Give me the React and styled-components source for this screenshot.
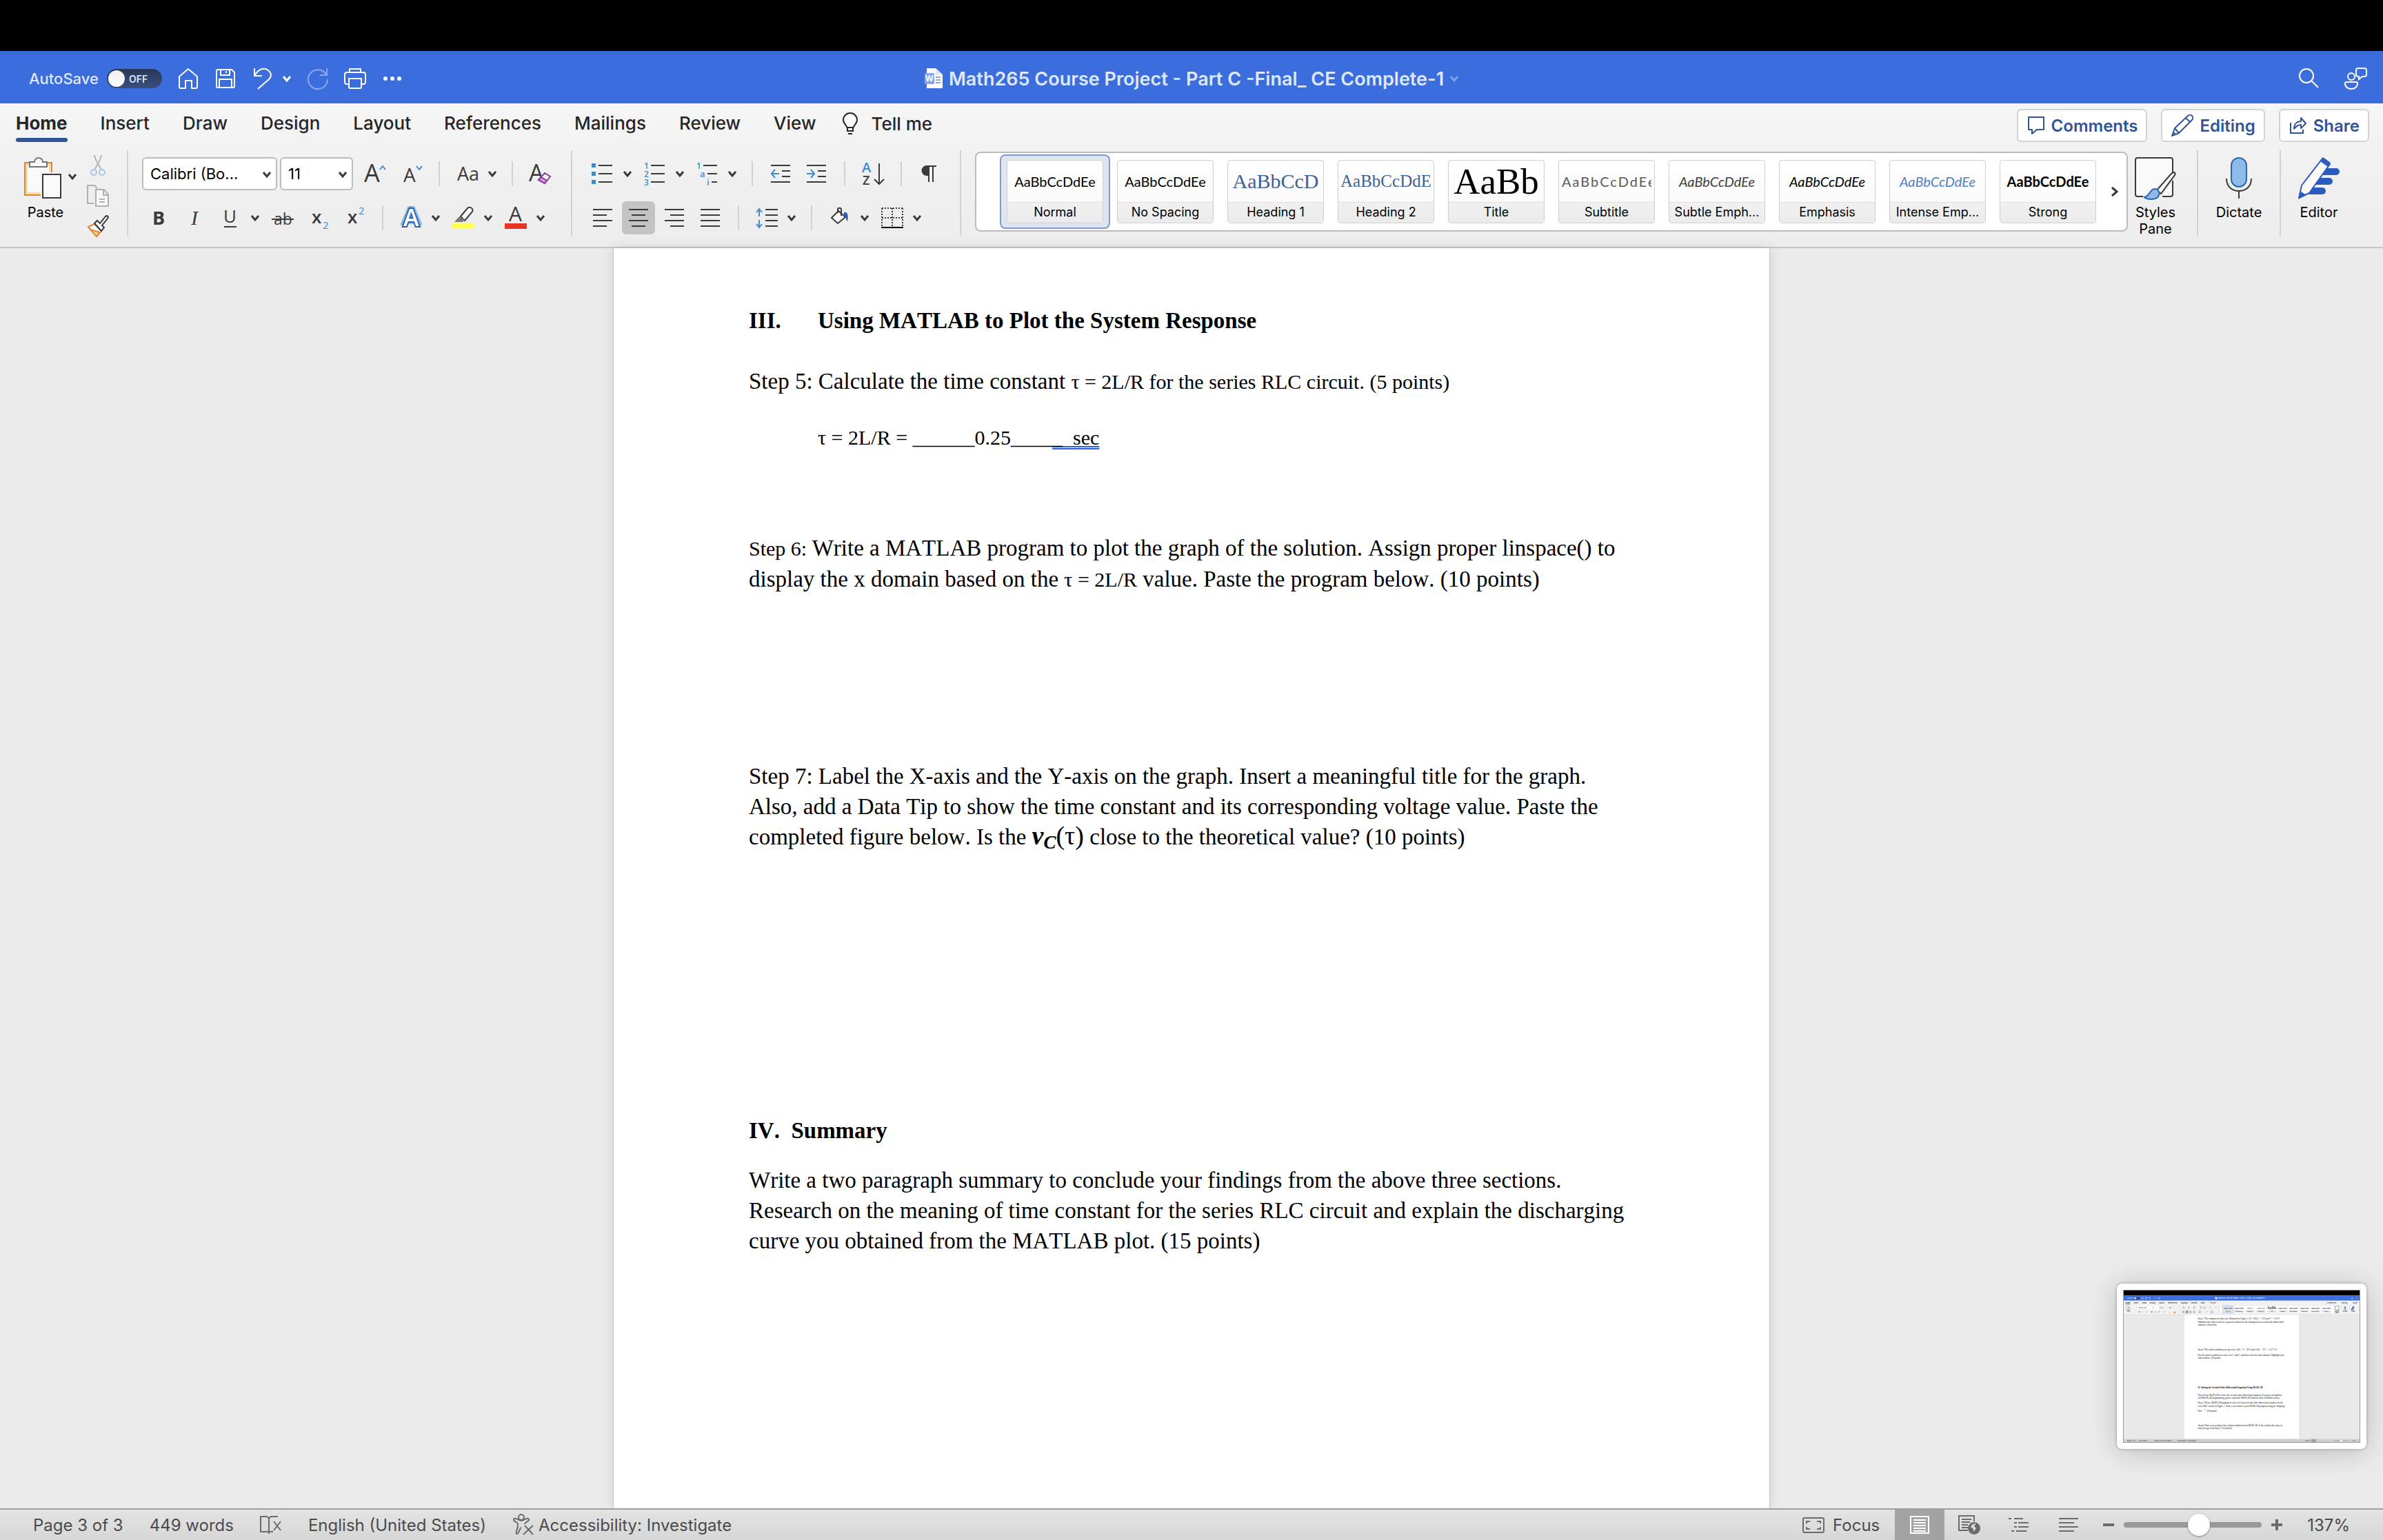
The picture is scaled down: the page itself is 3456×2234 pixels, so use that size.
import React, { Component } from 'react'
import styled, { createGlobalStyle, css } from 'styled-components'

const INK = '#3a3a3a'
const SKY = '#3f8bcf'
const NAVY = '#2f5597'

const TABS = [
  'Home',
  'Insert',
  'Draw',
  'Design',
  'Layout',
  'References',
  'Mailings',
  'Review',
  'View'
]

const STYLES = [
  { name: 'Normal', sample: 'AaBbCcDdEe' },
  { name: 'No Spacing', sample: 'AaBbCcDdEe' },
  { name: 'Heading 1', sample: 'AaBbCcD', look: 'heading1' },
  { name: 'Heading 2', sample: 'AaBbCcDdE', look: 'heading2' },
  { name: 'Title', sample: 'AaBb', look: 'title' },
  { name: 'Subtitle', sample: 'AaBbCcDdEe', look: 'subtitle' },
  { name: 'Subtle Emph...', sample: 'AaBbCcDdEe', look: 'subtle' },
  { name: 'Emphasis', sample: 'AaBbCcDdEe', look: 'emphasis' },
  { name: 'Intense Emp...', sample: 'AaBbCcDdEe', look: 'intense' },
  { name: 'Strong', sample: 'AaBbCcDdEe', look: 'strong' }
]

/* icons */

const Icon = ({ size = 32, w, h, color = INK, stroke = 2, children }) => (
  <svg
    width={w || size}
    height={h || size}
    viewBox={`0 0 ${w || size} ${h || size}`}
    fill="none"
    stroke={color}
    strokeWidth={stroke}
    aria-hidden="true"
  >
    {children}
  </svg>
)

const Glyph = ({ x, y, size, fill = INK, weight = 400, family = 'Open Sans', ...rest }) => (
  <text
    x={x}
    y={y}
    fontSize={size}
    fill={fill}
    stroke="none"
    fontWeight={weight}
    fontFamily={`"${family}", sans-serif`}
    {...rest}
  />
)

const Chevron = ({ color = INK }) => (
  <Icon w={14} h={10} color={color} stroke={3}>
    <path d="M2 2l5 6 5-6" />
  </Icon>
)

const HomeIcon = () => (
  <Icon color="#fff">
    <path d="M3 13 16 2l13 11v15a2 2 0 0 1-2 2h-6V19h-9v11H5a2 2 0 0 1-2-2z" strokeLinejoin="round" />
  </Icon>
)

const SaveIcon = () => (
  <Icon color="#fff">
    <path d="M3 5a2 2 0 0 1 2-2h20l4 4v20a2 2 0 0 1-2 2H5a2 2 0 0 1-2-2z" />
    <path d="M9 3v8h13V3M17 5v3M7 29V17h18v12" />
  </Icon>
)

const UndoIcon = () => (
  <Icon color="#fff">
    <path d="M4 1v11h11M4 12C9 3 17-1 24 4c5 4 5 9 1 13L9 31" />
  </Icon>
)

const RedoIcon = () => (
  <Icon color="#8dabec">
    <path d="M28 10A14 14 0 1 0 30 17M29 1v10H19" />
  </Icon>
)

const PrintIcon = () => (
  <Icon color="#fff">
    <path d="M8 7V2h16v5M7 24H4a3 3 0 0 1-3-3v-11a3 3 0 0 1 3-3h24a3 3 0 0 1 3 3v11a3 3 0 0 1-3 3h-3" />
    <path d="M7 16h18v12a2 2 0 0 1-2 2H9a2 2 0 0 1-2-2z" />
  </Icon>
)

const DotsIcon = () => (
  <Icon>
    <g fill="#fff" stroke="none">
      <circle cx="6" cy="16" r="3" />
      <circle cx="16" cy="16" r="3" />
      <circle cx="26" cy="16" r="3" />
    </g>
  </Icon>
)

const WordFileIcon = () => (
  <Icon w={28} h={30} stroke={0}>
    <path d="M4 0h13l10 9v20H4z" fill="#fff" />
    <path d="M17 0v9h10z" fill="#dbe4f8" />
    <rect x="1" y="7" width="14" height="16" rx="1" fill="#86a5e6" />
    <path d="M17 13h7M17 17h7M17 21h7" stroke="#86a5e6" strokeWidth="2" />
    <Glyph x={2} y={19} size={12} weight={700} fill="#fff">
      W
    </Glyph>
  </Icon>
)

const SearchIcon = () => (
  <Icon color="#fff">
    <circle cx="13" cy="12" r="10" />
    <path d="M20 19l10 10" />
  </Icon>
)

const PeopleIcon = () => (
  <Icon w={36} color="#fff">
    <circle cx="12" cy="13" r="5" />
    <path d="M5 21h14a2 2 0 0 1 2 2c0 5-4 8-9 8s-9-3-9-8a2 2 0 0 1 2-2z" />
    <path d="M22 1h9a3 3 0 0 1 3 3v6a3 3 0 0 1-3 3h-3l-5 4v-4h-1a3 3 0 0 1-3-3V4a3 3 0 0 1 3-3z" />
  </Icon>
)

const BulbIcon = () => (
  <Icon w={24} h={32} color="#262626">
    <path d="M8 24c0-5-6-7-6-13a10 10 0 0 1 20 0c0 6-6 8-6 13v3H8zM8 22h8" fill="#fdfdfd" />
    <path d="M9 31h6" />
  </Icon>
)

const CommentIcon = () => (
  <Icon w={28} color={NAVY}>
    <path d="M3 4h22v18H15l-7 6v-6H3z" strokeLinejoin="round" />
  </Icon>
)

const PencilIcon = () => (
  <Icon w={34} color={NAVY}>
    <path d="M2 31l4-11L25 2a4 4 0 0 1 6 6L12 27zM6 20l6 7M22 5l6 6M4 26l3 3" strokeLinejoin="round" />
  </Icon>
)

const ShareIcon = () => (
  <Icon w={28} color={NAVY}>
    <path d="M3 12v15h18v-5" />
    <path d="M8 21c0-7 4-11 10-11V5l7 8-7 7v-5c-4 0-7 2-10 6z" strokeLinejoin="round" />
  </Icon>
)

const PasteIcon = () => (
  <Icon w={64} h={60}>
    <rect x="2" y="8" width="39" height="47" fill="#f7dc9b" stroke="#e0883a" />
    <rect x="6" y="12" width="31" height="39" fill="#fafafa" stroke="none" />
    <path d="M9 14V7h7a6 6 0 0 1 12 0h6v7z" fill="#fafafa" stroke="#737371" />
    <path d="M25 22h31v38H25z" fill="#f2f2f2" stroke="none" />
    <path d="M28 25h26v34H28z" fill="#fafafa" />
  </Icon>
)

const CutIcon = () => (
  <Icon>
    <path d="M11 1c1 8 6 14 10 21M21 1c-1 8-6 14-10 21" stroke="#b3b3b3" />
    <circle cx="10" cy="26" r="4" stroke="#a6c6e4" />
    <circle cx="22" cy="26" r="4" stroke="#a6c6e4" />
  </Icon>
)

const CopyIcon = () => (
  <Icon color="#b0b0b0">
    <path d="M10 27H1V1h10l4 4" />
    <path d="M13 7h12l6 7v17H13zM24 7v8h7M18 21h8M18 25h8" fill="#f7f7f7" />
  </Icon>
)

const BrushIcon = () => (
  <Icon>
    <path d="M2 17l9-4 10 10-7 8z" fill="#fafafa" stroke="#e0883a" />
    <path d="M5 21l14 4-5 6z" fill="#f7dc9b" stroke="#e0883a" />
    <path d="M11 12l4-4 4 4 8-10c2-2 5 0 3 3l-8 10 3 3-4 5z" fill="#fafafa" />
  </Icon>
)

const GrowIcon = () => (
  <Icon>
    <Glyph x={0} y={28} size={36}>
      A
    </Glyph>
    <path d="M23 10l4-5 4 5" stroke={SKY} />
  </Icon>
)

const ShrinkIcon = () => (
  <Icon>
    <Glyph x={5} y={28} size={28}>
      A
    </Glyph>
    <path d="M24 5l4 5 4-5" stroke={SKY} />
  </Icon>
)

const CaseIcon = () => (
  <Icon w={34}>
    <Glyph x={2} y={26} size={27}>
      Aa
    </Glyph>
  </Icon>
)

const ClearIcon = () => (
  <Icon w={34}>
    <Glyph x={0} y={27} size={34}>
      A
    </Glyph>
    <path d="M22 14l9 6-8 12-10-6z" fill="#f2f2f2" stroke="none" />
    <path d="M23 15l8 5-8 10-9-5z" fill="#fafafa" stroke="#8e3a9d" />
    <path d="M14 25l4-4 8 5-3 4z" fill="#d39bdc" stroke="#8e3a9d" />
  </Icon>
)

const BoldIcon = () => (
  <Icon>
    <Glyph x={7} y={26} size={27} weight={700}>
      B
    </Glyph>
  </Icon>
)

const ItalicIcon = () => (
  <Icon>
    <Glyph x={11} y={26} size={30} fontStyle="italic" family="Liberation Serif">
      I
    </Glyph>
  </Icon>
)

const UnderlineIcon = () => (
  <Icon>
    <Glyph x={6} y={23} size={26}>
      U
    </Glyph>
    <path d="M7 29h18" />
  </Icon>
)

const StrikeIcon = () => (
  <Icon>
    <Glyph x={3} y={26} size={23}>
      ab
    </Glyph>
    <path d="M0 18h32" />
  </Icon>
)

const SubIcon = () => (
  <Icon>
    <Glyph x={6} y={24} size={26} weight={600}>
      x
    </Glyph>
    <Glyph x={22} y={32} size={15} fill={SKY}>
      2
    </Glyph>
  </Icon>
)

const SuperIcon = () => (
  <Icon>
    <Glyph x={6} y={24} size={26} weight={600}>
      x
    </Glyph>
    <Glyph x={22} y={11} size={15} fill={SKY}>
      2
    </Glyph>
  </Icon>
)

const EffectsIcon = () => (
  <Icon>
    <path d="M5 28L15 4h3l10 24M9 20h15" stroke="#8fbbe8" strokeWidth={10} />
    <Glyph
      x={5}
      y={28}
      size={34}
      weight={600}
      stroke="#2861b0"
      strokeWidth={4}
      fill="#fff"
      paintOrder="stroke"
    >
      A
    </Glyph>
  </Icon>
)

const HighlightIcon = () => (
  <Icon>
    <path d="M12 14l10-12c3-3 9 0 7 5L18 20z" fill="#fafafa" />
    <path d="M3 22l7-8 8 5-3 3z" fill="#7a7a7a" stroke="none" />
    <rect y="24" width="32" height="8" fill="#ffff54" stroke="none" />
  </Icon>
)

const FontColorIcon = () => (
  <Icon>
    <Glyph x={6} y={21} size={30}>
      A
    </Glyph>
    <rect y="24" width="32" height="8" fill="#ea3323" stroke="none" />
  </Icon>
)

const BulletsIcon = () => (
  <Icon>
    <path d="M0 1h6v6H0zM0 13h6v6H0zM0 25h6v6H0z" fill={SKY} stroke="none" />
    <path d="M10 4h20M10 16h20M10 28h20" />
  </Icon>
)

const NumbersIcon = () => (
  <Icon h={34}>
    <Glyph x={0} y={10} size={12} weight={600} fill={SKY}>1</Glyph>
    <Glyph x={0} y={22} size={12} weight={600} fill={SKY}>2</Glyph>
    <Glyph x={0} y={34} size={12} weight={600} fill={SKY}>3</Glyph>
    <path d="M10 5h20M10 17h20M10 29h20" />
  </Icon>
)

const MultilevelIcon = () => (
  <Icon h={34}>
    <Glyph x={0} y={10} size={12} weight={600} fill={SKY}>1</Glyph>
    <Glyph x={5} y={22} size={13} weight={600} fill={SKY}>a</Glyph>
    <Glyph x={15} y={34} size={13} weight={600} fill={SKY}>i</Glyph>
    <path d="M10 5h20M16 17h14M22 29h8" />
  </Icon>
)

const IndentIcon = ({ out }) => (
  <Icon>
    <path d="M2 4h28M18 12h12M18 20h12M2 28h28" />
    <path d={out ? 'M14 16H3M8 10l-5 6 5 6' : 'M2 16h11M8 10l5 6-5 6'} stroke={SKY} />
  </Icon>
)

const SortIcon = () => (
  <Icon>
    <Glyph x={0} y={14} size={20} weight={600} fill={SKY}>A</Glyph>
    <Glyph x={1} y={32} size={18} weight={600}>Z</Glyph>
    <path d="M25 1v29M18 24l7 7 7-7" />
  </Icon>
)

const PilcrowIcon = () => (
  <Icon>
    <path d="M13 5h-1a6 6 0 0 0 0 13h1z" fill={INK} />
    <path d="M12 5h14M15 5v23M21 5v23" />
  </Icon>
)

const LINES = {
  left: ['M2 4h28', 'M2 12h20', 'M2 20h28', 'M2 28h20'],
  center: ['M2 4h28', 'M6 12h20', 'M2 20h28', 'M6 28h20'],
  right: ['M2 4h28', 'M10 12h20', 'M2 20h28', 'M10 28h20'],
  justify: ['M2 4h28', 'M2 12h28', 'M2 20h28', 'M2 28h28']
}

const AlignIcon = ({ kind }) => (
  <Icon>
    <path d={LINES[kind].join('')} />
  </Icon>
)

const SpacingIcon = () => (
  <Icon>
    <path d="M14 4h18M14 12h18M14 20h18M14 28h18" />
    <path d="M5 3v11M1 8l4-5 4 5M5 19v11M1 25l4 5 4-5" stroke={SKY} />
  </Icon>
)

const ShadingIcon = () => (
  <Icon>
    <path d="M14 6L4 16l9 8 11-9z" fill="#fafafa" />
    <path d="M13 9V4c0-3 5-3 5 0v9" />
    <path d="M22 8c5-1 7 4 5 13-3-2-1-7-5-9z" fill="#2861b0" stroke="none" />
  </Icon>
)

const BordersIcon = () => (
  <Icon>
    <path d="M1 2h30M1 2v27M31 2v27M16 2v27M1 16h30" strokeDasharray="2 2" />
    <path d="M0 30h32" stroke="#000" />
  </Icon>
)

const StylesPaneIcon = () => (
  <Icon size={60}>
    <path d="M55 22V4a3 3 0 0 0-3-3H4a3 3 0 0 0-3 3v50a3 3 0 0 0 3 3h8M40 57h12a3 3 0 0 0 3-3V34" fill="#fafafa" />
    <path d="M32 48l20-23c4-4 8-4 6 1L38 53z" fill="#fafafa" />
    <path d="M14 58c8-1 8-13 16-12 8 2 8 15-6 15-4 0-8-1-10-3z" fill="#90bbe7" stroke="#2b67b3" />
  </Icon>
)

const MicIcon = () => (
  <Icon w={40} h={60}>
    <path d="M2 31c0 12 8 18 18 18s18-6 18-18M20 49v11" />
    <rect x="9" y="1" width="22" height="42" rx="11" fill="#90bbe7" stroke="#2b67b3" />
  </Icon>
)

const EditorIcon = () => (
  <Icon w={62} h={60}>
    <path d="M32 21h24M26 35h20M18 49h18" stroke="#2b5bbd" strokeWidth="10" strokeLinecap="round" />
    <path d="M2 59l4-18L36 2l11 8-30 42z" fill="#fafafa" stroke="#2b5bbd" strokeLinejoin="round" />
    <path d="M37 0l11 8-4 6-11-8zM1 61l4-11 8 5z" fill="#2b5bbd" stroke="none" />
  </Icon>
)

const ProofIcon = () => (
  <Icon h={28} color="#6b6b6b">
    <path d="M13 24H1V2h9l3 2 3-2h10M13 4v23M13 24h6M20 9l10 13M30 9L20 22" />
  </Icon>
)

const AccessIcon = () => (
  <Icon color="#6b6b6b">
    <circle cx="13" cy="5" r="4" />
    <path d="M13 10C8 10 4 4 2 8c-1 3 6 4 6 7 1 6-4 11-2 14 3 2 5-9 7-9M13 10c5 0 9-6 11-2 1 3-6 4-6 7M18 17l12 13M30 17L16 30" />
  </Icon>
)

const FocusIcon = () => (
  <Icon h={26} color="#6b6b6b">
    <rect x="1" y="3" width="30" height="21" rx="2" />
    <path d="M6 11V8h5M21 8h5v3M26 16v3h-5M11 19H6v-3" />
  </Icon>
)

const PrintViewIcon = () => (
  <Icon w={28} h={28} color="#fff">
    <path d="M1 2h26v24H1zM5 7h18M5 11h18M5 15h18M5 19h18M5 23h18" />
  </Icon>
)

const WebViewIcon = () => (
  <Icon h={30} color="#6b6b6b">
    <path d="M14 23H1V2h22v8M5 7h14M5 11h12M5 15h9M5 19h9" />
    <ellipse cx="23" cy="20" rx="9" ry="9" fill="#6b6b6b" stroke="none" />
    <path d="M21 14l-3 4 4 3v4l4-5-3-3 3-4z" fill="#ddd" stroke="none" />
  </Icon>
)

const OutlineViewIcon = () => (
  <Icon h={26} color="#6b6b6b">
    <path d="M1 4h4M9 4h13M9 10h4M15 10h15M9 16h4M15 16h15M5 22h4M12 22h15" />
  </Icon>
)

const DraftViewIcon = () => (
  <Icon h={26} color="#6b6b6b">
    <path d="M2 4h28M2 10h22M2 16h28M2 22h22" />
  </Icon>
)

/* pieces of the ribbon */

const Tool = ({ label, active, children }) => (
  <ToolButton type="button" aria-label={label} $active={active}>
    {children}
  </ToolButton>
)

const SplitTool = ({ label, children }) => (
  <Split>
    <Tool label={label}>{children}</Tool>
    <MoreButton type="button" aria-label={`${label} options`}>
      <Chevron />
    </MoreButton>
  </Split>
)

const TitleBar = () => (
  <Bar>
    <QuickAccess>
      <AutoSave htmlFor="autosave">
        AutoSave
        <Switch>
          <SwitchKnob id="autosave" type="checkbox" role="switch" />
          OFF
        </Switch>
      </AutoSave>
      <BarButton type="button" aria-label="Home"><HomeIcon /></BarButton>
      <BarButton type="button" aria-label="Save"><SaveIcon /></BarButton>
      <UndoGroup>
        <BarButton type="button" aria-label="Undo"><UndoIcon /></BarButton>
        <BarButton type="button" aria-label="Undo history"><Chevron color="#fff" /></BarButton>
      </UndoGroup>
      <BarButton type="button" aria-label="Repeat"><RedoIcon /></BarButton>
      <BarButton type="button" aria-label="Print"><PrintIcon /></BarButton>
      <BarButton type="button" aria-label="More"><DotsIcon /></BarButton>
    </QuickAccess>
    <DocumentName>
      <WordFileIcon />
      Math265 Course Project - Part C -Final_ CE Complete-1
      <Chevron color="#7f9fe8" />
    </DocumentName>
    <BarActions>
      <BarButton type="button" aria-label="Search"><SearchIcon /></BarButton>
      <BarButton type="button" aria-label="Presence"><PeopleIcon /></BarButton>
    </BarActions>
  </Bar>
)

const TabRow = () => (
  <Tabs>
    <TabList>
      {TABS.map((tab, i) => (
        <Tab key={tab} type="button" $active={i === 0}>
          {tab}
        </Tab>
      ))}
      <TellMe type="button">
        <BulbIcon />
        Tell me
      </TellMe>
    </TabList>
    <TabActions>
      <ActionButton type="button"><CommentIcon />Comments</ActionButton>
      <ActionButton type="button"><PencilIcon />Editing</ActionButton>
      <ActionButton type="button"><ShareIcon />Share</ActionButton>
    </TabActions>
  </Tabs>
)

const ClipboardGroup = () => (
  <Clipboard>
    <PasteButton type="button">
      <PasteIcon />
      Paste
    </PasteButton>
    <PasteMore type="button" aria-label="Paste options"><Chevron /></PasteMore>
    <ClipboardTools>
      <BarButton type="button" aria-label="Cut"><CutIcon /></BarButton>
      <BarButton type="button" aria-label="Copy"><CopyIcon /></BarButton>
      <BarButton type="button" aria-label="Format painter"><BrushIcon /></BarButton>
    </ClipboardTools>
  </Clipboard>
)

const FontGroup = () => (
  <Group>
    <Row>
      <FontPickers>
        <SelectBox $width="196px">
          <Select aria-label="Font" defaultValue="body">
            <option value="body">Calibri (Bo...</option>
          </Select>
          <Chevron />
        </SelectBox>
        <SelectBox $width="106px">
          <Select aria-label="Font size" defaultValue="11">
            <option value="11">11</option>
          </Select>
          <Chevron />
        </SelectBox>
      </FontPickers>
      <Tool label="Grow font"><GrowIcon /></Tool>
      <Tool label="Shrink font"><ShrinkIcon /></Tool>
      <Divider />
      <SplitTool label="Change case"><CaseIcon /></SplitTool>
      <Divider />
      <Tool label="Clear formatting"><ClearIcon /></Tool>
    </Row>
    <Row>
      <Tool label="Bold"><BoldIcon /></Tool>
      <Tool label="Italic"><ItalicIcon /></Tool>
      <SplitTool label="Underline"><UnderlineIcon /></SplitTool>
      <Tool label="Strikethrough"><StrikeIcon /></Tool>
      <Tool label="Subscript"><SubIcon /></Tool>
      <Tool label="Superscript"><SuperIcon /></Tool>
      <Divider />
      <SplitTool label="Text effects"><EffectsIcon /></SplitTool>
      <SplitTool label="Highlight"><HighlightIcon /></SplitTool>
      <SplitTool label="Font color"><FontColorIcon /></SplitTool>
    </Row>
  </Group>
)

const ParagraphGroup = () => (
  <Group>
    <Row>
      <SplitTool label="Bullets"><BulletsIcon /></SplitTool>
      <SplitTool label="Numbering"><NumbersIcon /></SplitTool>
      <SplitTool label="Multilevel list"><MultilevelIcon /></SplitTool>
      <Divider />
      <Tool label="Decrease indent"><IndentIcon out /></Tool>
      <Tool label="Increase indent"><IndentIcon /></Tool>
      <Divider />
      <Tool label="Sort"><SortIcon /></Tool>
      <Divider />
      <Tool label="Show marks"><PilcrowIcon /></Tool>
    </Row>
    <Row>
      <Tool label="Align left"><AlignIcon kind="left" /></Tool>
      <Tool label="Center" active><AlignIcon kind="center" /></Tool>
      <Tool label="Align right"><AlignIcon kind="right" /></Tool>
      <Tool label="Justify"><AlignIcon kind="justify" /></Tool>
      <Divider />
      <SplitTool label="Line spacing"><SpacingIcon /></SplitTool>
      <Divider />
      <SplitTool label="Shading"><ShadingIcon /></SplitTool>
      <SplitTool label="Borders"><BordersIcon /></SplitTool>
    </Row>
  </Group>
)

class StyleGallery extends Component {
  state = {
    selected: 'Normal'
  }

  pick = name => {
    this.setState({ selected: name })
  }

  render = () => {
    return (
      <Gallery>
        {STYLES.map(({ name, sample, look }) => (
          <StyleOption
            key={name}
            type="button"
            $selected={name === this.state.selected}
            onClick={() => this.pick(name)}
          >
            <StyleCard>
              <Sample $look={look}>{sample}</Sample>
              <StyleName>{name}</StyleName>
            </StyleCard>
          </StyleOption>
        ))}
        <GalleryNext type="button" aria-label="More styles">
          <Icon w={12} h={16} stroke={3}>
            <path d="M2 2l7 6-7 6" />
          </Icon>
        </GalleryNext>
      </Gallery>
    )
  }
}

const DocumentPage = () => (
  <Page>
    <SectionHeading>
      <Numeral>III.</Numeral>Using MATLAB to Plot the System Response
    </SectionHeading>
    <Paragraph $before="44px">
      Step 5: Calculate the time constant{' '}
      <Small>τ = 2L/R for the series RLC circuit. (5 points)</Small>
    </Paragraph>
    <Paragraph $before="36px" $indent>
      <Small>
        τ = 2L/R = ______0.25____<Flagged>_&nbsp; sec</Flagged>
      </Small>
    </Paragraph>
    <Paragraph $before="116px">
      <Small>Step 6: </Small>Write a MATLAB program to plot the graph of the solution. Assign
      proper linspace() to display the x domain based on the <Small>τ = 2L/R</Small> value. Paste
      the program below. (10 points)
    </Paragraph>
    <Paragraph $before="241px">
      Step 7: Label the X-axis and the Y-axis on the graph. Insert a meaningful title for the
      graph. Also, add a Data Tip to show the time constant and its corresponding voltage value.
      Paste the completed figure below. Is the{' '}
      <MathText>
        <b>v</b>
        <sub>C</sub>(τ)
      </MathText>{' '}
      close to the theoretical value? (10 points)
    </Paragraph>
    <SectionHeading $before="382px">IV.&nbsp; Summary</SectionHeading>
    <Paragraph $before="28px">
      Write a two paragraph summary to conclude your findings from the above three sections.
      Research on the meaning of time constant for the series RLC circuit and explain the
      discharging curve you obtained from the MATLAB plot. (15 points)
    </Paragraph>
  </Page>
)

const PREVIEW_LINES = [
  [430, 'Step 1: The component values are illustrated in Figure 1. R = 8 Ω, L = 1 H, and C = 1/15 F.'],
  [476, 'Substitute the values to derive a general solution for the homogeneous second order differential'],
  [522, 'equation. (10 points)'],
  [886, 'Step 2: The initial conditions are given as: v(0) = V = 20 V and v′(0) = −I/C = −I₀/C V/s'],
  [966, 'Use the initial conditions to solve for C₁ and C₂ and then write the final solution. Highlight your'],
  [1010, 'final solution. (10 points)'],
  [1438, 'II. Solving the Second Order Differential Equation Using MATLAB', 700],
  [1552, 'You will use MATLAB to solve the second order differential equation. If you are not familiar'],
  [1596, 'with MATLAB programming, please watch the MATLAB Tutorial video in Media Gallery.'],
  [1670, 'Step 3: Write a MATLAB program to solve the linear second order differential equation for the'],
  [1716, 'series RLC circuit in Figure 1. Paste a screenshot of your MATLAB program using the Snipping'],
  [1786, 'Tool       . (20 points)'],
  [2000, 'Step 4: Paste a screenshot of the solution obtained from MATLAB. Is the solution the same as'],
  [2044, 'what you get from Step 2? (10 points)']
]

const PREVIEW_TABS = [23, 144, 267, 379, 513, 647, 837, 988, 1125]

// the floating capture of the previous page, bottom right
const CapturePreview = () => (
  <Capture type="button" aria-label="Captured window">
    <svg viewBox="0 0 3456 2234" preserveAspectRatio="none" fontFamily='Inter, sans-serif'>
      <rect width="3456" height="2234" fill="#e9e9e9" />
      <rect width="3456" height="74" />
      <rect y="74" width="3456" height="76" fill="#3c6ddd" />
      <g fill="#dde6fa" fontSize="22">
        <text x="42" y="122">AutoSave</text>
        <rect x="155" y="100" width="79" height="28" rx="14" fill="#2f416e" />
        <circle cx="170" cy="114" r="13" fill="#fff" />
        <text x="1379" y="124" fontSize="26" fontWeight="700">Math265 Course Project - Part C -Final_ CE Complete-1</text>
        <rect x="1341" y="99" width="26" height="30" fill="#fff" />
      </g>
      <g fill="none" stroke="#dde6fa" strokeWidth="5">
        <path d="M262 128v-18l12-11 12 11v18zM316 100h26v28h-26zM370 100v12h12M372 112c20-20 36 0 8 18M502 106h28v18h-28z" />
        <circle cx="462" cy="114" r="13" stroke="#8dabec" />
        <circle cx="3346" cy="112" r="10" />
        <path d="M3354 120l10 9M3402 126l26-24" />
      </g>
      <rect y="150" width="3456" height="208" fill="#f2f2f2" />
      <g fontSize="26" fill="#262626">
        {TABS.map((tab, i) => (
          <text key={tab} x={PREVIEW_TABS[i]} y="188" fontWeight={i ? 500 : 700}>{tab}</text>
        ))}
        <text x="1263" y="188">Tell me</text>
        <rect x="22" y="200" width="76" height="6" fill={NAVY} />
        <g fill={NAVY} fontWeight="600">
          <text x="2977" y="188">Comments</text>
          <text x="3190" y="188">Editing</text>
          <text x="3356" y="188">Share</text>
        </g>
      </g>
      <path d="M36 236h40v48H36z" fill="#fff" stroke="#e0883a" strokeWidth="6" />
      <path d="M62 252h26v34H62z" fill="#fff" stroke={INK} strokeWidth="4" />
      <rect x="208" y="228" width="306" height="48" fill="#fff" />
      <g fontSize="24" fill={INK}>
        <text x="42" y="318" fontSize="20">Paste</text>
        <text x="218" y="261">Calibri (Bo...</text>
        <text x="420" y="261">11</text>
        <text x="530" y="264">A^  Aˇ</text>
        <text x="663" y="262">Aa</text>
        <text x="220" y="326" fontWeight="700">B</text>
        <text x="276" y="326" fontStyle="italic">I</text>
        <text x="324" y="326">U</text>
        <text x="396" y="326">ab</text>
        <text x="455" y="326">x₂</text>
        <text x="506" y="326">x²</text>
        <text x="584" y="322" fill="#2861b0">A</text>
        <text x="738" y="322">A</text>
      </g>
      <path d="M656 328h32" stroke="#ffe600" strokeWidth="8" />
      <path d="M732 328h32" stroke="#ea3323" strokeWidth="8" />
      <rect x="902" y="292" width="48" height="48" fill="#c4c4c4" />
      <g stroke={INK} strokeWidth="3">
        {[868, 944, 1020, 1118, 1170].map(x => (
          <path key={x} d={`M${x} 240h24M${x} 252h24M${x} 264h24`} />
        ))}
        {[862, 914, 966, 1018, 1102].map(x => (
          <path key={x} d={`M${x} 304h26M${x} 312h26M${x} 320h26M${x} 328h26`} />
        ))}
        <path d="M1266 236v30M1342 242h16M1206 312h26M1278 302h30v26h-30z" fill="none" />
        <path d="M186 218v124M830 218v124M1392 218v124M3183 218v124M3308 218v124" stroke="#d0d0d0" />
      </g>
      <rect x="1414" y="220" width="1672" height="116" fill="#fff" stroke="#bbb" strokeWidth="2" />
      <rect x="1451" y="225" width="158" height="106" fill="#dfe6f1" stroke="#7f9bcb" strokeWidth="4" />
      <g textAnchor="middle">
        {STYLES.map(({ name, sample, look }, i) => (
          <g key={name}>
            <rect x={1460 + i * 160} y="294" width="140" height="31" fill="#e4e4e4" />
            <text
              x={1530 + i * 160}
              y={look === 'title' ? 278 : 270}
              fontSize={look === 'title' ? 52 : 20}
              fill={look && look.startsWith('heading') ? '#3f6296' : '#111'}
            >
              {sample}
            </text>
            <text x={1530 + i * 160} y="315" fontSize="18">{name}</text>
          </g>
        ))}
        <text x="3124" y="316" fontSize="20">Styles</text>
        <text x="3124" y="340" fontSize="20">Pane</text>
        <text x="3243" y="316" fontSize="20">Dictate</text>
        <text x="3362" y="316" fontSize="20">Editor</text>
      </g>
      <path d="M3100 230h52v54h-52z" fill="#fff" stroke={INK} strokeWidth="4" />
      <rect x="3230" y="230" width="26" height="56" rx="13" fill="#6fa5df" />
      <path d="M3336 286l34-54M3350 280h20M3356 258h24" stroke="#2b5bbd" strokeWidth="14" />
      <path d="M0 359h3456" stroke="#c4c4c4" strokeWidth="3" />
      <rect x="890" y="360" width="1678" height="1828" fill="#fff" />
      <g fontFamily='"Liberation Serif", serif' fontSize="33">
        {PREVIEW_LINES.map(([y, text, weight]) => (
          <text key={y} x="1086" y={y} fontWeight={weight} xmlSpace="preserve">{text}</text>
        ))}
      </g>
      <path d="M1180 1745l20 24" stroke="#6fa5df" strokeWidth="10" />
      <rect y="2188" width="3456" height="46" fill="#cfcfcf" />
      <g fontSize="24" fill="#4b4b4b">
        <text x="49" y="2220">Page 2 of 3</text>
        <text x="218" y="2220">449 words</text>
        <text x="447" y="2220">English (United States)</text>
        <text x="783" y="2220">Accessibility: Investigate</text>
        <text x="2658" y="2220">Focus</text>
        <text x="3345" y="2220">137%</text>
      </g>
      <rect x="2746" y="2190" width="74" height="44" fill="#a3a3a3" />
      <path d="M3080 2212h200" stroke="#999" strokeWidth="8" />
      <circle cx="3188" cy="2212" r="16" fill="#fff" />
    </svg>
  </Capture>
)

const StatusBar = () => (
  <Status>
    <StatusSide>
      <StatusItem type="button">Page 3 of 3</StatusItem>
      <StatusItem type="button">449 words</StatusItem>
      <StatusItem type="button" aria-label="Proofing"><ProofIcon /></StatusItem>
      <StatusItem type="button">English (United States)</StatusItem>
      <StatusItem type="button"><AccessIcon />Accessibility: Investigate</StatusItem>
    </StatusSide>
    <StatusViews>
      <FocusButton type="button"><FocusIcon />Focus</FocusButton>
      <ViewButton type="button" aria-label="Print layout" $active><PrintViewIcon /></ViewButton>
      <ViewButton type="button" aria-label="Web layout"><WebViewIcon /></ViewButton>
      <ViewButton type="button" aria-label="Outline"><OutlineViewIcon /></ViewButton>
      <ViewButton type="button" aria-label="Draft"><DraftViewIcon /></ViewButton>
      <ZoomControls>
        <StatusItem type="button" aria-label="Zoom out">
          <Icon w={16} h={16} color="#6b6b6b" stroke={4}><path d="M0 8h16" /></Icon>
        </StatusItem>
        <ZoomSlider type="range" min="0" max="100" defaultValue="55" aria-label="Zoom" />
        <StatusItem type="button" aria-label="Zoom in">
          <Icon w={16} h={16} color="#6b6b6b" stroke={4}><path d="M0 8h16M8 0v16" /></Icon>
        </StatusItem>
      </ZoomControls>
      <StatusItem type="button">137%</StatusItem>
    </StatusViews>
  </Status>
)

const App = () => (
  <Screen>
    <GlobalStyle />
    <MenuStrip />
    <TitleBar />
    <Ribbon>
      <TabRow />
      <Tools>
        <ClipboardGroup />
        <GroupLine />
        <FontGroup />
        <GroupLine />
        <ParagraphGroup />
        <GroupLine />
        <StyleGallery />
        <BigButton type="button" $width="80px"><StylesPaneIcon />Styles Pane</BigButton>
        <GroupLine />
        <BigButton type="button" $width="78px"><MicIcon />Dictate</BigButton>
        <GroupLine />
        <BigButton type="button" $width="70px"><EditorIcon />Editor</BigButton>
      </Tools>
    </Ribbon>
    <Workspace>
      <DocumentPage />
    </Workspace>
    <StatusBar />
    <CapturePreview />
  </Screen>
)

const GlobalStyle = createGlobalStyle`
  * {
    box-sizing: border-box;
  }

  body {
    margin: 0;
    font-family: Inter, 'Liberation Sans', sans-serif;
    color: #000;
  }

  button {
    border: 0;
    padding: 0;
    background: none;
    font: inherit;
    color: inherit;
  }

  svg {
    display: block;
    flex: none;
    overflow: visible;
  }
`

const Screen = styled.div`
  display: flex;
  flex-direction: column;
  min-height: 100vh;
  overflow: hidden;
  background: #ebebeb;
`

const MenuStrip = styled.div`
  height: 74px;
  background: #000;
`

const Bar = styled.header`
  display: grid;
  grid-template-columns: 1fr auto 1fr;
  align-items: center;
  height: 76px;
  padding: 4px 22px 0;
  background: #3c6ddd;
  color: #dfe7fb;
`

const QuickAccess = styled.div`
  display: flex;
  align-items: center;
  gap: 22px;
  padding-left: 20px;
`

const BarButton = styled.button`
  display: flex;
  align-items: center;
  justify-content: center;
`

const UndoGroup = styled.div`
  display: flex;
  gap: 12px;
`

const AutoSave = styled.label`
  display: flex;
  align-items: center;
  gap: 12px;
  font-size: 22px;
  font-weight: 500;
`

const Switch = styled.span`
  display: flex;
  align-items: center;
  gap: 6px;
  width: 80px;
  height: 28px;
  padding: 2px;
  border-radius: 14px;
  background: linear-gradient(#283758, #3b4d7c);
  font-size: 14px;
  font-weight: 600;
`

const SwitchKnob = styled.input`
  appearance: none;
  width: 24px;
  height: 24px;
  margin: 0;
  border-radius: 50%;
  background: linear-gradient(#eee, #fff);
`

const DocumentName = styled.div`
  display: flex;
  align-items: center;
  gap: 8px;
  font-size: 27px;
  font-weight: 600;
`

const BarActions = styled.div`
  display: flex;
  justify-content: flex-end;
  gap: 34px;
`

const Ribbon = styled.section`
  padding-top: 8px;
  border-bottom: 2px solid #c6c6c6;
  background: linear-gradient(#f6f6f6, #f1f1f1 40%, #ededed);
`

const Tabs = styled.nav`
  display: flex;
  justify-content: space-between;
  padding: 0 20px 0 23px;
`

const TabList = styled.div`
  display: flex;
  gap: 48px;
`

const Tab = styled.button`
  display: flex;
  flex-direction: column;
  height: 48px;
  line-height: 42px;
  font-size: 26px;
  font-weight: ${props => (props.$active ? 700 : 500)};
  color: #262626;

  &::after {
    content: '';
    width: 100%;
    height: 6px;
    border-radius: 3px;
    background: ${props => (props.$active ? NAVY : 'transparent')};
  }
`

const TellMe = styled.button`
  display: flex;
  align-items: center;
  gap: 18px;
  height: 42px;
  margin-left: -10px;
  font-size: 26px;
  font-weight: 500;
  color: #262626;
`

const TabActions = styled.div`
  display: flex;
  gap: 20px;
`

const ActionButton = styled.button`
  display: flex;
  align-items: center;
  gap: 8px;
  height: 48px;
  padding: 0 12px;
  border: 2px solid #d3d3d3;
  border-radius: 6px;
  background: #fff;
  font-size: 24px;
  font-weight: 600;
  color: ${NAVY};
`

const Tools = styled.div`
  display: flex;
  align-items: flex-start;
  padding: 12px 58px 14px 34px;
`

const GroupLine = styled.div`
  flex: none;
  width: 2px;
  height: 124px;
  margin: 0 20px;
  background: #d2d2d2;
`

const Clipboard = styled.div`
  display: flex;
  padding-right: 6px;
`

const PasteButton = styled.button`
  display: flex;
  flex-direction: column;
  align-items: center;
  gap: 8px;
  padding-top: 10px;
  font-size: 20px;
`

const PasteMore = styled.button`
  height: 76px;
`

const ClipboardTools = styled.div`
  display: flex;
  flex-direction: column;
  gap: 12px;
  padding: 6px 0 0 14px;
`

const Group = styled.div`
  display: flex;
  flex: none;
  flex-direction: column;
  gap: 16px;
  padding-top: 10px;
`

const Row = styled.div`
  display: flex;
  align-items: center;
  gap: 4px;
  height: 48px;
`

const FontPickers = styled.div`
  display: flex;
  gap: 4px;
  margin-right: 4px;
`

const ToolButton = styled.button`
  display: flex;
  align-items: center;
  justify-content: center;
  width: 48px;
  height: 48px;
  border-radius: 6px;
  background: ${props => (props.$active ? '#c4c4c4' : 'none')};
`

const Split = styled.div`
  display: flex;
`

const MoreButton = styled.button`
  display: flex;
  align-items: center;
  justify-content: center;
  width: 24px;
`

const Divider = styled.div`
  width: 2px;
  height: 36px;
  margin: 0 12px;
  background: #d2d2d2;
`

const SelectBox = styled.div`
  position: relative;
  width: ${props => props.$width};

  svg {
    position: absolute;
    top: 20px;
    right: 8px;
    pointer-events: none;
  }
`

const Select = styled.select`
  appearance: none;
  width: 100%;
  height: 48px;
  padding: 0 10px;
  border: 2px solid #bdbdbd;
  border-radius: 6px;
  background: #fff;
  font: 22px Inter, sans-serif;
  color: #000;
`

const Gallery = styled.div`
  display: flex;
  flex: 1;
  align-items: center;
  height: 116px;
  margin-top: 2px;
  padding-left: 34px;
  overflow: hidden;
  border: 2px solid #bcbcbc;
  border-radius: 8px;
  background: #fff;
`

const StyleOption = styled.button`
  flex: none;
  width: 160px;
  height: 108px;
  padding: 6px 8px;
  border: 2px solid ${props => (props.$selected ? '#7f9bcb' : 'transparent')};
  border-radius: 8px;
  background: ${props => (props.$selected ? '#dfe6f1' : 'none')};
`

const StyleCard = styled.span`
  display: flex;
  flex-direction: column;
  height: 92px;
  overflow: hidden;
  border: 1px solid #cfcfcf;
  border-radius: 4px;
  background: linear-gradient(#fff, #f7f7f7);
`

const LOOKS = {
  heading1: css`
    font: 30px 'Liberation Serif', serif;
    color: #3f6296;
  `,
  heading2: css`
    font: 25px 'Liberation Serif', serif;
    color: #3f6296;
  `,
  title: css`
    font: 53px 'Liberation Serif', serif;
  `,
  subtitle: css`
    justify-content: flex-start;
    letter-spacing: 2px;
    color: #5a5a5a;
  `,
  subtle: css`
    font-style: italic;
    color: #404040;
  `,
  emphasis: css`
    font-style: italic;
  `,
  intense: css`
    font-style: italic;
    color: #4f7fc3;
  `,
  strong: css`
    font-weight: 700;
  `
}

const Sample = styled.span`
  display: flex;
  align-items: center;
  justify-content: center;
  height: 60px;
  margin: 0 4px;
  overflow: hidden;
  font: 20px Lato, sans-serif;
  white-space: nowrap;
  ${props => LOOKS[props.$look]}
`

const StyleName = styled.span`
  flex: 1;
  border-top: 1px solid #e0e0e0;
  background: linear-gradient(#f1f1f1, #ebebeb);
  font-size: 18px;
  line-height: 28px;
  white-space: nowrap;
`

const GalleryNext = styled.button`
  display: flex;
  flex: 1;
  align-items: center;
  justify-content: center;
  height: 100%;
`

const BigButton = styled.button`
  display: flex;
  flex: none;
  flex-direction: column;
  align-items: center;
  gap: 8px;
  width: ${props => props.$width};
  padding-top: 10px;
  font-size: 20px;
  line-height: 24px;
`

const Workspace = styled.main`
  display: flex;
  flex: 1;
  justify-content: center;
`

const Page = styled.article`
  width: 1678px;
  padding: 83px 196px 0;
  border: solid #c9c9c9;
  border-width: 0 1px;
  background: #fff;
  box-shadow: 0 0 16px rgba(0, 0, 0, 0.12);
  font: 33px/44px 'Liberation Serif', 'Times New Roman', serif;
  font-kerning: none;
`

const SectionHeading = styled.h2`
  margin: ${props => props.$before || 0} 0 0;
  font-size: 33px;
  font-weight: 700;
`

const Numeral = styled.span`
  display: inline-block;
  width: 100px;
`

const Paragraph = styled.p`
  margin: ${props => props.$before} 0 0;
  padding-left: ${props => (props.$indent ? '100px' : 0)};
`

const Small = styled.span`
  font-size: 30px;
`

const Flagged = styled.span`
  text-decoration: underline double #2f5fd8;
  text-decoration-skip-ink: none;
  text-decoration-thickness: 2px;
  text-underline-offset: 2px;
`

const MathText = styled.span`
  font-size: 38px;
  line-height: 0;

  b,
  sub {
    font-weight: 700;
    font-style: italic;
  }

  sub {
    font-size: 27px;
    vertical-align: -6px;
  }
`

const Status = styled.footer`
  display: flex;
  justify-content: space-between;
  height: 46px;
  border-top: 2px solid #a0a0a0;
  background: linear-gradient(#e3e3e3, #d7d7d7);
  font-size: 24px;
  color: #4b4b4b;
`

const StatusSide = styled.div`
  display: flex;
  gap: 38px;
  padding-left: 48px;
`

const StatusItem = styled.button`
  display: flex;
  align-items: center;
  gap: 6px;
`

const StatusViews = styled.div`
  display: flex;
  padding-right: 48px;
`

const FocusButton = styled.button`
  display: flex;
  align-items: center;
  gap: 12px;
  padding-right: 22px;
`

const ViewButton = styled.button`
  display: flex;
  align-items: center;
  justify-content: center;
  width: 72px;
  background: ${props => (props.$active ? '#a3a3a3' : 'none')};
`

const ZoomControls = styled.div`
  display: flex;
  align-items: center;
  gap: 14px;
  padding: 0 36px 0 14px;
`

const ZoomSlider = styled.input`
  appearance: none;
  width: 200px;
  height: 8px;
  margin: 0;
  border-radius: 4px;
  background: #999;

  &::-webkit-slider-thumb {
    appearance: none;
    width: 32px;
    height: 32px;
    border-radius: 50%;
    background: #fff;
    box-shadow: 0 1px 3px rgba(0, 0, 0, 0.4);
  }
`

const Capture = styled.button`
  position: absolute;
  right: 24px;
  bottom: 132px;
  width: 362px;
  height: 240px;
  padding: 9px;
  border-radius: 8px;
  background: #fff;
  box-shadow: 0 4px 40px rgba(0, 0, 0, 0.2), 0 0 4px rgba(0, 0, 0, 0.3);

  svg {
    width: 100%;
    height: 100%;
    overflow: hidden;
    border: 1px solid #999;
  }
`

export default App
